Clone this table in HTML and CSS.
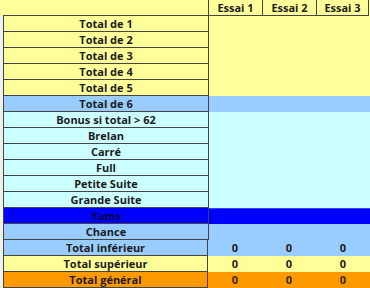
FILE: index.html
```html
<!DOCTYPE html>
<html lang="fr">
<head>
<meta charset="utf-8">
<title>Yams</title>
<link rel="stylesheet" href="styles.css">
</head>
<body>
<div class="sheet">
  <div class="hdr">
    <div class="hdr-blank"></div>
    <div class="hcell">Essai 1</div>
    <div class="hcell">Essai 2</div>
    <div class="hcell last">Essai 3</div>
  </div>
  <div class="row yellow"><div class="label">Total de 1</div><div class="vals"></div></div>
  <div class="row yellow"><div class="label">Total de 2</div><div class="vals"></div></div>
  <div class="row yellow"><div class="label">Total de 3</div><div class="vals"></div></div>
  <div class="row yellow"><div class="label">Total de 4</div><div class="vals"></div></div>
  <div class="row yellow"><div class="label">Total de 5</div><div class="vals"></div></div>
  <div class="row blue"><div class="label">Total de 6</div><div class="vals"></div></div>
  <div class="row cyan"><div class="label">Bonus si total &gt; 62</div><div class="vals"></div></div>
  <div class="row cyan"><div class="label">Brelan</div><div class="vals"></div></div>
  <div class="row cyan"><div class="label">Carré</div><div class="vals"></div></div>
  <div class="row cyan"><div class="label">Full</div><div class="vals"></div></div>
  <div class="row cyan"><div class="label">Petite Suite</div><div class="vals"></div></div>
  <div class="row cyan"><div class="label">Grande Suite</div><div class="vals"></div></div>
  <div class="row yams"><div class="label">Yams</div><div class="vals"></div></div>
  <div class="row blue"><div class="label">Chance</div><div class="vals"></div></div>
  <div class="row blue"><div class="label">Total inférieur</div><div class="vals"><span class="v">0</span><span class="v">0</span><span class="v">0</span></div></div>
  <div class="row yellow"><div class="label">Total supérieur</div><div class="vals"><span class="v">0</span><span class="v">0</span><span class="v">0</span></div></div>
  <div class="row orange"><div class="label">Total général</div><div class="vals"><span class="v">0</span><span class="v">0</span><span class="v">0</span></div></div>
</div>
</body>
</html>
```
FILE: styles.css
```css
html, body {
  margin: 0;
  padding: 0;
}
body {
  background: #f0f0f0;
  font-family: "Open Sans", "DejaVu Sans", sans-serif;
  font-size: 11px;
  font-weight: bold;
  color: #1c1c1c;
  overflow: hidden;
}
.sheet {
  width: 370px;
  display: flex;
  flex-direction: column;
}
.hdr {
  display: flex;
  height: 16px;
  background: #ffff99;
}
.hdr-blank {
  margin-left: 3px;
  width: 205px;
  border-bottom: 1px solid #444;
}
.hcell {
  width: 53px;
  border-left: 1px solid #444;
  border-bottom: 1px solid #444;
  display: flex;
  align-items: center;
  justify-content: center;
  line-height: 15px;
}
.hcell.last {
  width: 51px;
  border-right: 1px solid #444;
}
.row {
  display: flex;
  height: 16px;
  margin-left: 3px;
}
.label {
  width: 204px;
  border-left: 1px solid #444;
  border-right: 1px solid #444;
  border-bottom: 1px solid #444;
  height: 15px;
  display: flex;
  align-items: center;
  justify-content: center;
  line-height: 15px;
  white-space: nowrap;
}
.vals {
  flex: 1;
  display: flex;
  height: 16px;
}
.v {
  width: 54px;
  height: 15px;
  display: flex;
  align-items: center;
  justify-content: center;
  line-height: 15px;
}
.yellow .label, .yellow .vals { background: #ffff99; }
.blue .label, .blue .vals { background: #99ccff; }
.cyan .label, .cyan .vals { background: #ccffff; }
.yams .label, .yams .vals { background: #0000ff; }
.yams .label { color: #000040; }
.yams .vals { border-top: 1px solid #3344ff; height: 15px; }
.orange .label, .orange .vals { background: #ff9900; }
.orange .v { color: #3a2a00; }
```
